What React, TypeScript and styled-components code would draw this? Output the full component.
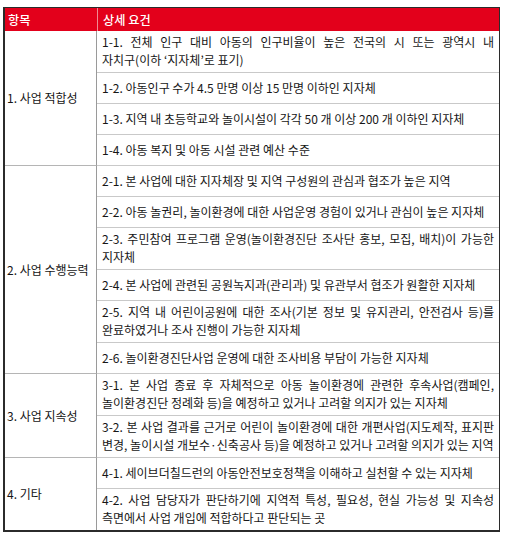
import React from "react";
import styled, { createGlobalStyle } from "styled-components";

const GlobalStyle = createGlobalStyle`
  html, body {
    margin: 0;
    padding: 0;
    background: #ffffff;
  }
  body {
    font-family: "Noto Sans CJK KR", "Noto Sans", sans-serif;
  }
`;

const Page = styled.div`
  padding: 7px 5px 0 3px;
  width: 505px;
  box-sizing: border-box;
`;

const Table = styled.div`
  display: grid;
  grid-template-columns: 92px 1fr;
  border: 1px solid #2b2b2b;
  border-left-width: 2px;
  border-bottom-width: 2px;
  color: #161616;
  font-size: 12px;
  line-height: 18px;
`;

const HeadCell = styled.div<{ $first?: boolean }>`
  height: 23px;
  background: #e3001b;
  color: #fff;
  font-size: 12.2px;
  font-weight: 500;
  display: flex;
  align-items: center;
  padding-left: ${(p) => (p.$first ? "3px" : "5px")};
  border-left: ${(p) => (p.$first ? "none" : "1px solid #f08a93")};
`;

const Label = styled.div<{ $span: number; $last: boolean }>`
  grid-row: span ${(p) => p.$span};
  display: flex;
  align-items: center;
  padding-left: 2px;
  border-right: 1px solid #9a9a9a;
  border-bottom: ${(p) => (p.$last ? "none" : "1px solid #b5b5b5")};
  font-size: 12px;
`;

const Cell = styled.div<{ $last: boolean }>`
  min-height: 31px;
  box-sizing: border-box;
  display: flex;
  flex-direction: column;
  justify-content: center;
  padding: 2px 5px 3px 5px;
  border-bottom: ${(p) => (p.$last ? "none" : "1px solid #c9c9c9")};
`;

const Line = styled.div<{ $fill: boolean; $tight?: boolean }>`
  text-align: justify;
  text-align-last: ${(p) => (p.$fill ? "justify" : "left")};
  white-space: nowrap;
  letter-spacing: ${(p) => (p.$tight ? "-0.3px" : "0")};
`;

type Group = { label: string; items: string[][] };

const groups: Group[] = [
  {
    label: "1. 사업 적합성",
    items: [
      [
        "1-1. 전체 인구 대비 아동의 인구비율이 높은 전국의 시 또는 광역시 내",
        "자치구(이하 ‘지자체’로 표기)",
      ],
      ["1-2. 아동인구 수가 4.5 만명 이상 15 만명 이하인 지자체"],
      ["1-3. 지역 내 초등학교와 놀이시설이 각각 50 개 이상 200 개 이하인 지자체"],
      ["1-4. 아동 복지 및 아동 시설 관련 예산 수준"],
    ],
  },
  {
    label: "2. 사업 수행능력",
    items: [
      ["2-1. 본 사업에 대한 지자체장 및 지역 구성원의 관심과 협조가 높은 지역"],
      ["2-2. 아동 놀권리, 놀이환경에 대한 사업운영 경험이 있거나 관심이 높은 지자체"],
      [
        "2-3. 주민참여 프로그램 운영(놀이환경진단 조사단 홍보, 모집, 배치)이 가능한",
        "지자체",
      ],
      ["2-4. 본 사업에 관련된 공원녹지과(관리과) 및 유관부서 협조가 원활한 지자체"],
      [
        "2-5. 지역 내 어린이공원에 대한 조사(기본 정보 및 유지관리, 안전검사 등)를",
        "완료하였거나 조사 진행이 가능한 지자체",
      ],
      ["2-6. 놀이환경진단사업 운영에 대한 조사비용 부담이 가능한 지자체"],
    ],
  },
  {
    label: "3. 사업 지속성",
    items: [
      [
        "3-1. 본 사업 종료 후 자체적으로 아동 놀이환경에 관련한 후속사업(캠페인,",
        "놀이환경진단 정례화 등)을 예정하고 있거나 고려할 의지가 있는 지자체",
      ],
      [
        "3-2. 본 사업 결과를 근거로 어린이 놀이환경에 대한 개편사업(지도제작, 표지판",
        "변경, 놀이시설 개보수·신축공사 등)을 예정하고 있거나 고려할 의지가 있는 지역",
      ],
    ],
  },
  {
    label: "4. 기타",
    items: [
      ["4-1. 세이브더칠드런의 아동안전보호정책을 이해하고 실천할 수 있는 지자체"],
      [
        "4-2. 사업 담당자가 판단하기에 지역적 특성, 필요성, 현실 가능성 및 지속성",
        "측면에서 사업 개입에 적합하다고 판단되는 곳",
      ],
    ],
  },
];

export default function App() {
  return (
    <Page>
      <GlobalStyle />
      <Table>
        <HeadCell $first>항목</HeadCell>
        <HeadCell>상세 요건</HeadCell>
        {groups.map((g, gi) => {
          const lastGroup = gi === groups.length - 1;
          return (
            <React.Fragment key={g.label}>
              <Label $span={g.items.length} $last={lastGroup}>
                {g.label}
              </Label>
              {g.items.map((lines, ii) => (
                <Cell
                  key={lines[0]}
                  $last={lastGroup && ii === g.items.length - 1}
                >
                  {lines.map((t, li) => (
                    <Line key={li} $fill={li < lines.length - 1}>
                      {t}
                    </Line>
                  ))}
                </Cell>
              ))}
            </React.Fragment>
          );
        })}
      </Table>
    </Page>
  );
}
